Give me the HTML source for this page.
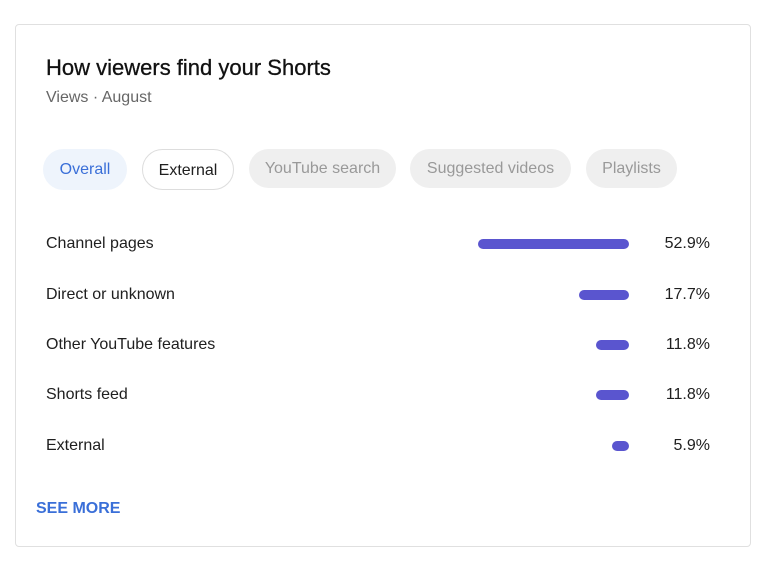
<!DOCTYPE html><html><head><style>
body{margin:0;width:768px;height:571px;background:#fff;font-family:"Liberation Sans",sans-serif;position:relative;overflow:hidden}
.card{position:absolute;left:15px;top:24px;width:736px;height:523px;border:1px solid #e0e0e0;border-radius:4px;box-sizing:border-box}
.a{position:absolute;white-space:nowrap}
.chip{position:absolute;top:149px;height:41px;border-radius:21px;box-sizing:border-box;font-size:16px;line-height:41px;text-align:center}
.lbl{position:absolute;left:46px;font-size:16px;color:#202020}
.bar{position:absolute;height:10px;border-radius:5px;background:#5a55cf}
.pct{position:absolute;right:58px;font-size:16px;color:#202020;text-align:right}
</style></head><body>
<div class="card"></div>
<div class="a" style="left:46px;top:55px;font-size:22px;color:#111;-webkit-text-stroke:0.3px #111">How viewers find your Shorts</div>
<div class="a" style="left:46px;top:89px;font-size:16px;color:#666">Views · August</div>
<div class="chip" style="left:43px;width:84px;background:#eef4fc;color:#3a6fd8">Overall</div>
<div class="chip" style="left:142px;width:92px;border:1px solid #ddd;color:#202020">External</div>
<div class="chip" style="left:249px;width:147px;height:39px;line-height:39px;background:#efefef;color:#999">YouTube search</div>
<div class="chip" style="left:410px;width:161px;height:39px;line-height:39px;background:#efefef;color:#999">Suggested videos</div>
<div class="chip" style="left:586px;width:91px;height:39px;line-height:39px;background:#efefef;color:#999">Playlists</div>

<div class="lbl" style="top:235px">Channel pages</div><div class="bar" style="left:478px;width:151px;top:239px"></div><div class="pct" style="top:235px">52.9%</div>
<div class="lbl" style="top:286px">Direct or unknown</div><div class="bar" style="left:579px;width:50px;top:290px"></div><div class="pct" style="top:286px">17.7%</div>
<div class="lbl" style="top:336px">Other YouTube features</div><div class="bar" style="left:596px;width:33px;top:340px"></div><div class="pct" style="top:336px">11.8%</div>
<div class="lbl" style="top:386px">Shorts feed</div><div class="bar" style="left:596px;width:33px;top:390px"></div><div class="pct" style="top:386px">11.8%</div>
<div class="lbl" style="top:437px">External</div><div class="bar" style="left:612px;width:17px;top:441px"></div><div class="pct" style="top:437px">5.9%</div>

<div class="a" style="left:36px;top:500px;font-size:16px;font-weight:bold;color:#3a6fd8">SEE MORE</div>
</body></html>
